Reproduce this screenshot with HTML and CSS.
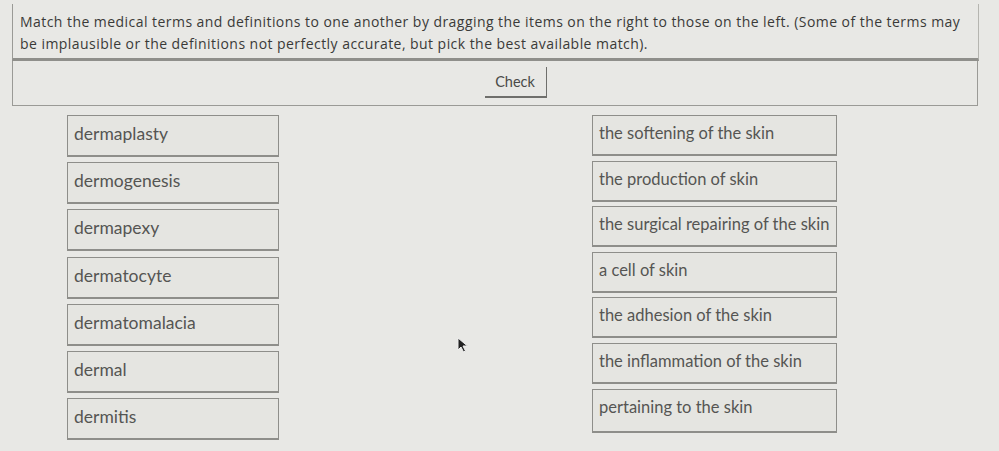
FILE: index.html
```html
<!DOCTYPE html>
<html lang="en">
<head>
    <meta charset="UTF-8">
    <meta name="viewport" content="width=device-width, initial-scale=1.0">
    <title>Medical terms matching</title>
    <link rel="stylesheet" href="styles.css">
</head>
<body>
    <div class="prompt">
        Match the medical terms and definitions to one another by dragging the items on the right to those on the left. (Some of the terms may be implausible or the definitions not perfectly accurate, but pick the best available match).
    </div>
    <div class="check-bar">
        <button class="check">Check</button>
    </div>

    <div class="match">
        <div class="terms">
            <div class="item term">dermaplasty</div>
            <div class="item term">dermogenesis</div>
            <div class="item term">dermapexy</div>
            <div class="item term">dermatocyte</div>
            <div class="item term">dermatomalacia</div>
            <div class="item term">dermal</div>
            <div class="item term">dermitis</div>
        </div>
        <div class="defs">
            <div class="item def">the softening of the skin</div>
            <div class="item def">the production of skin</div>
            <div class="item def">the surgical repairing of the skin</div>
            <div class="item def">a cell of skin</div>
            <div class="item def">the adhesion of the skin</div>
            <div class="item def">the inflammation of the skin</div>
            <div class="item def last">pertaining to the skin</div>
        </div>
    </div>

    <svg class="cursor" width="12" height="16" viewBox="0 0 12 16">
        <path d="M1 1 L1 13 L4 10 L6.5 15 L8.5 14 L6 9 L10.5 9 Z" fill="#222" stroke="#eee" stroke-width="1"/>
    </svg>
</body>
</html>
```

FILE: styles.css
```css
body {
    margin: 0;
    padding: 0;
    background-color: #e8e8e5;
    font-family: "Lato", "Noto Sans", sans-serif;
    position: relative;
    height: 451px;
    overflow: hidden;
}
.prompt {
    margin: 4px 0 0 12px;
    width: 944px;
    padding: 7px 14px 3px 7px;
    border-left: 1px solid #9a9a96;
    border-right: 1px solid #b5b5b0;
    border-bottom: 3px solid #8f8f8b;
    font-family: "Open Sans", "Noto Sans", sans-serif;
    font-size: 14px;
    letter-spacing: 0.45px;
    line-height: 22px;
    color: #3a3a38;
}
.check-bar {
    margin-left: 12px;
    width: 964px;
    height: 44px;
    border: 1px solid #9a9a96;
    border-top: none;
    display: flex;
    justify-content: center;
    align-items: flex-start;
}
.check {
    margin: 6px 0 0 42px;
    padding: 6px 11px 6px 10px;
    background: transparent;
    border: none;
    border-right: 1px solid #6f6f6c;
    border-bottom: 2px solid #6f6f6c;
    font-family: "Lato", sans-serif;
    font-size: 14.5px;
    color: #4a4a48;
}
.match {
    display: flex;
    padding: 9px 0 0 67px;
    gap: 313px;
}
.terms, .defs {
    display: flex;
    flex-direction: column;
}
.terms {
    gap: 5.2px;
}
.defs {
    gap: 4.6px;
}
.item {
    box-sizing: border-box;
    border: 1px solid #8e8e8a;
    border-bottom-width: 2px;
    background-color: #e5e5e1;
    color: #555553;
    padding: 0 5px 0 6px;
}
.term {
    width: 212px;
    height: 42px;
    font-size: 17.5px;
    padding-top: 7px;
}
.def {
    width: 245px;
    height: 41px;
    font-size: 16.5px;
    padding-top: 7px;
}
.def.last {
    height: 44px;
}
.cursor {
    position: absolute;
    left: 457px;
    top: 337px;
}
```
